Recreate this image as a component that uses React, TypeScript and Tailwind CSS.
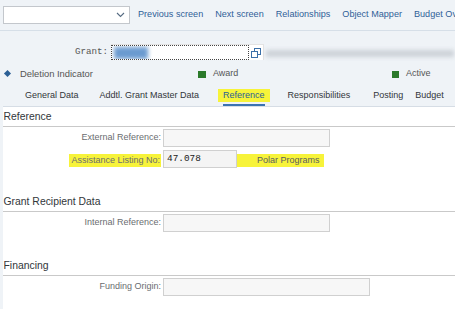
import React from "react";

const sans = { fontFamily: '"Liberation Sans", Arial, sans-serif' };

function Heading({ children }: { children: React.ReactNode }) {
  return (
    <div className="h-[20px] flex items-center border-b border-[#c9c9c9] text-[10.4px] text-[#32363a] pl-[0.5px]">
      {children}
    </div>
  );
}

function Field({ label, w }: { label: string; w: number }) {
  return (
    <div className="flex items-center">
      <div className="w-[158px] text-right text-[9px] text-[#6a6d70]">{label}</div>
      <div className="w-[2px]" />
      <div className="h-[18px] bg-[#f7f7f7] border border-[#d0d0d0]" style={{ width: w }} />
    </div>
  );
}

export default function App() {
  const links = ["Previous screen", "Next screen", "Relationships", "Object Mapper", "Budget Overview"];
  const tabs: { t: string; ml: string }[] = [
    { t: "General Data", ml: "ml-[25px]" },
    { t: "Addtl. Grant Master Data", ml: "ml-[21px]" },
    { t: "Reference", ml: "ml-[24px]" },
    { t: "Responsibilities", ml: "ml-[23px]" },
    { t: "Posting", ml: "ml-[23px]" },
    { t: "Budget", ml: "ml-[12px]" },
  ];
  return (
    <div className="w-[455px] h-[309px] overflow-hidden bg-[#eff3f7] flex flex-col" style={sans}>
      {/* top bar */}
      <div className="h-[31px] shrink-0 border-b border-[#d6dfe8] flex items-center pl-[3px] whitespace-nowrap">
        <div className="w-[127px] shrink-0 h-[18px] bg-white border border-[#c3c7cc] flex items-center justify-end pr-[4px]">
          <svg width="9" height="6" viewBox="0 0 9 6">
            <path d="M1 1 L4.5 4.5 L8 1" fill="none" stroke="#556b82" strokeWidth="1.1" />
          </svg>
        </div>
        <div className="flex gap-[12px] ml-[8px] text-[9.1px] text-[#2f5f98] mt-[-1px] shrink-0">
          {links.map((l) => (
            <span key={l}>{l}</span>
          ))}
        </div>
      </div>

      {/* grant row */}
      <div className="flex items-center pt-[13px] h-[29px] shrink-0 whitespace-nowrap relative">
        <span
          className="ml-[75px] w-[36px] text-[9.2px] text-[#555]"
          style={{ fontFamily: '"Liberation Mono", "Courier New", monospace' }}
        >
          Grant:
        </span>
        <div className="w-[153px] h-[16px] bg-white flex relative border-r border-t border-[#e3e3e3]">
          <div className="w-[138px] h-full border border-dotted border-[#444] relative overflow-hidden">
            <div className="absolute left-[2px] top-[1px] w-[34px] h-[12px] bg-[#6b9bd0] blur-[2px]" />
          </div>
          <div className="flex-1 flex items-center justify-center">
            <svg width="10" height="10" viewBox="0 0 10 10">
              <rect x="3.5" y="0.5" width="6" height="6" fill="white" stroke="#3a6fa8" />
              <rect x="0.5" y="3.5" width="6" height="6" fill="white" stroke="#3a6fa8" />
            </svg>
          </div>
        </div>
        <div className="ml-[2px] w-[188px] h-[7px] bg-[#cdd2d8] blur-[2px] mt-[2px]" />
      </div>

      {/* status row */}
      <div className="flex items-center h-[16px] mt-[6px] shrink-0 pl-[5px] text-[#555] whitespace-nowrap">
        <div className="w-[193px] flex items-center">
          <div className="w-[5px] h-[5px] bg-[#2b5f95] rotate-45" />
          <span className="ml-[10px] text-[9.4px]">Deletion Indicator</span>
        </div>
        <div className="w-[194px] flex items-center">
          <div className="w-[8px] h-[7px] bg-[#2b7a2b]" />
          <span className="ml-[7px] text-[9px]">Award</span>
        </div>
        <div className="flex items-center">
          <div className="w-[7px] h-[7px] bg-[#2b7a2b]" />
          <span className="ml-[7px] text-[9px]">Active</span>
        </div>
      </div>

      {/* tabs */}
      <div className="h-[24px] shrink-0 flex whitespace-nowrap">
        {tabs.map(({ t, ml }) => {
          const active = t === "Reference";
          return (
            <div key={t} className={"flex flex-col items-stretch pt-[7px] shrink-0 " + ml}>
              <span
                className={
                  "h-[13px] leading-[13px] text-[9px] " +
                  (active ? "bg-[#f7f33a] text-[#2b5f95] px-[5px] -mx-[5px]" : "text-[#32363a]")
                }
              >
                {t}
              </span>
              <div className={"mt-[2px] h-[2px] " + (active ? "bg-[#3b73b0]" : "")} />
            </div>
          );
        })}
      </div>

      {/* content */}
      <div className="flex-1 ml-[3px] bg-white border-t border-[#d6dde5] flex flex-col">
        <Heading>Reference</Heading>
        <div className="mt-[2px]">
          <Field label="External Reference:" w={167} />
        </div>
        <div className="mt-[3px] flex items-center">
          <div className="w-[158px] flex justify-end">
            <span className="bg-[#f7f33a] text-[9px] text-[#6a6d70] h-[13px] leading-[13px] pl-[2px] pr-[1px] mt-[3px]">
              Assistance Listing No:
            </span>
          </div>
          <div className="w-[2px]" />
          <div
            className="w-[74px] h-[18px] bg-[#f4f4f4] border border-[#d0d0d0] flex items-center pl-[3px] text-[9.4px] text-[#1a1a1a]"
            style={{ fontFamily: '"Liberation Mono", "Courier New", monospace' }}
          >
            47.078
          </div>
          <span className="bg-[#f7f33a] text-[9px] text-[#5a5d60] h-[13px] leading-[13px] pl-[20px] pr-[4px] mt-[3px]">
            Polar Programs
          </span>
        </div>

        <div className="mt-[24px]">
          <Heading>Grant Recipient Data</Heading>
        </div>
        <div className="mt-[2px]">
          <Field label="Internal Reference:" w={167} />
        </div>

        <div className="mt-[24px]">
          <Heading>Financing</Heading>
        </div>
        <div className="mt-[2px]">
          <Field label="Funding Origin:" w={207} />
        </div>
      </div>
    </div>
  );
}
